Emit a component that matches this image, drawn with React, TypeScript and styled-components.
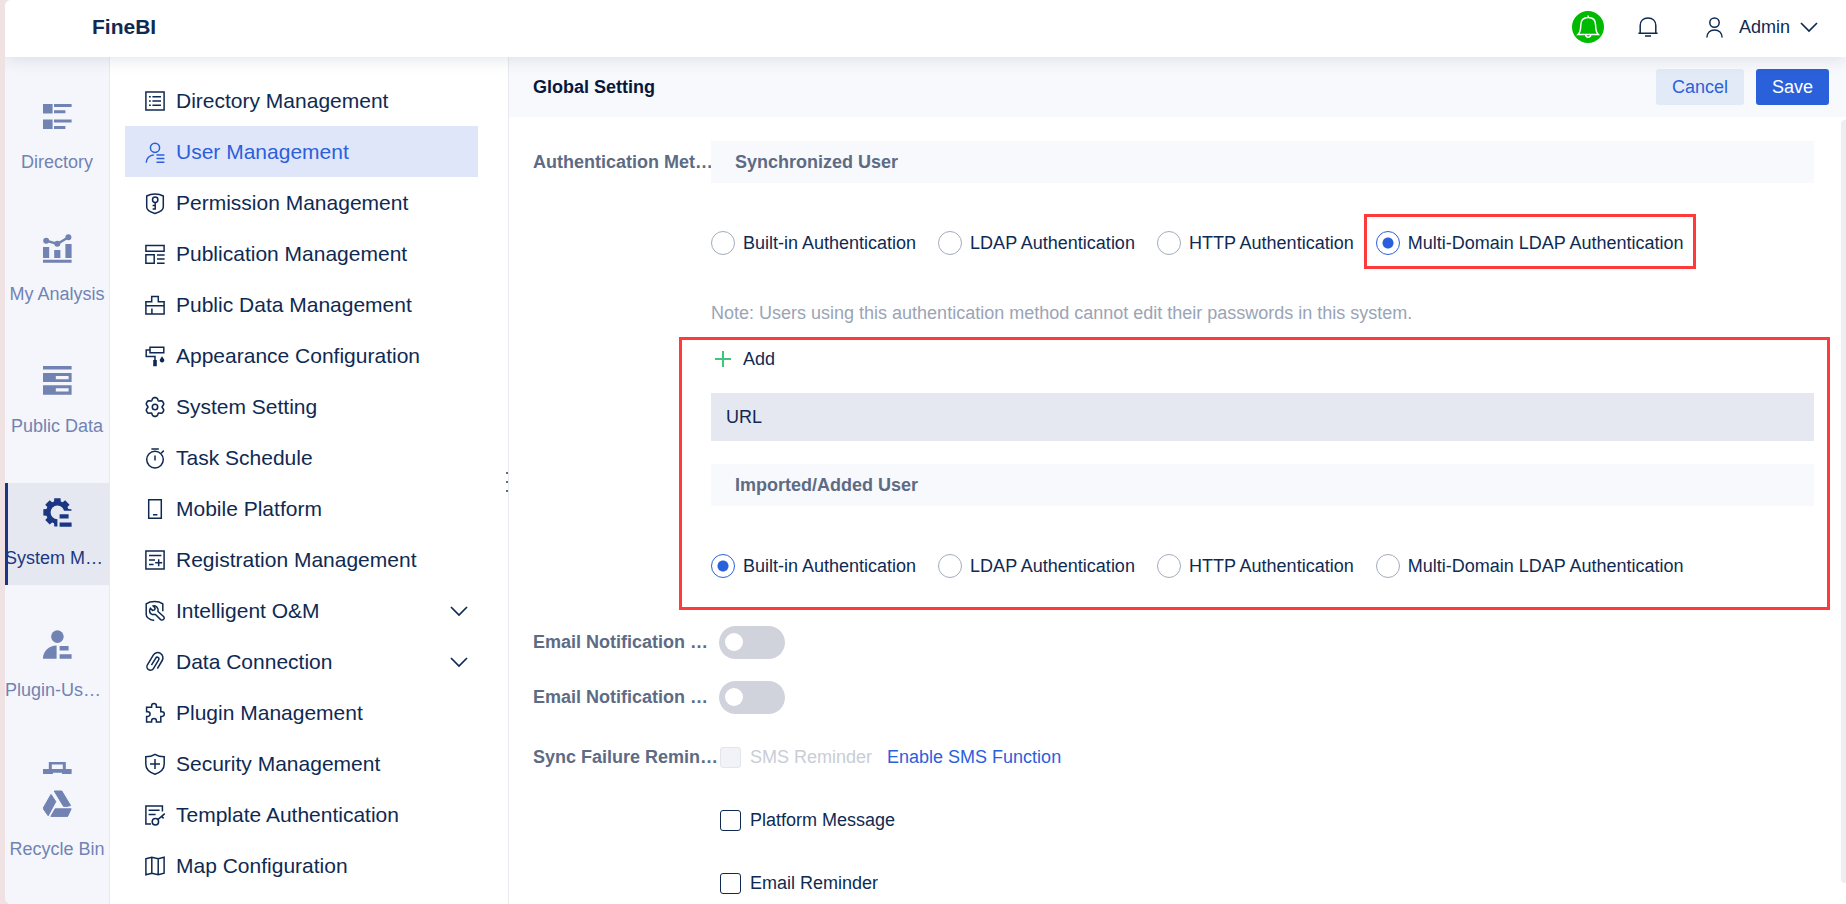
import React, { useState } from "react";
import styled, { createGlobalStyle, css } from "styled-components";

const ink = "#0f2a52";
const muted = "#5d6b84";
const blue = "#2b60db";
const slate = "#7183b3";

const GlobalStyle = createGlobalStyle`
  * { box-sizing: border-box; }
  body {
    margin: 0;
    background: #f0e2e2;
    font-family: "Liberation Sans", Arial, sans-serif;
    font-size: 18px;
    line-height: 24px;
    color: ${ink};
  }
  button, input { font: inherit; margin: 0; }
`;

/* ---------- icon geometry ---------- */

const waveGear = (() => {
  const pts: string[] = [];
  for (let i = 0; i < 72; i++) {
    const t = (i / 72) * Math.PI * 2;
    const r = 8.5 + 1.2 * Math.cos(6 * t) - 0.3 * Math.cos(12 * t);
    pts.push(`${(10 + r * Math.sin(t)).toFixed(2)},${(10 - r * Math.cos(t)).toFixed(2)}`);
  }
  return pts.join(" ");
})();

const toothGear = (() => {
  const pts: string[] = [];
  for (let i = 0; i < 8; i++) {
    const c = (i * Math.PI) / 4;
    [[-0.3, 11.4], [-0.22, 14.4], [0.22, 14.4], [0.3, 11.4]].forEach(([d, r]) =>
      pts.push(`${(14.4 + r * Math.sin(c + d)).toFixed(2)} ${(14.4 - r * Math.cos(c + d)).toFixed(2)}`)
    );
  }
  return `M${pts.join("L")}ZM14.4 7.6A6.8 6.8 0 1 0 14.4 21.2A6.8 6.8 0 1 0 14.4 7.6Z`;
})();

const Line = styled.svg.attrs({ viewBox: "0 0 20 20", "aria-hidden": true })`
  width: 20px;
  height: 20px;
  flex: none;
  overflow: visible;
  fill: none;
  stroke: currentColor;
  stroke-width: 1.5;
`;

const Solid = styled.svg.attrs({ viewBox: "0 0 29 29", "aria-hidden": true })`
  display: block;
  width: 29px;
  height: 29px;
  flex: none;
  fill: currentColor;
`;

const menuIcons: Record<string, React.ReactNode> = {
  directory: (
    <Line>
      <path d="M.9 .9H19.1V19.1H.9ZM4 5.8H5.8M7.4 5.8H16M4 10H5.8M7.4 10H16M4 14.2H5.8M7.4 14.2H16" />
    </Line>
  ),
  user: (
    <Line>
      <circle cx="10" cy="5.8" r="4.6" />
      <path d="M1.2 20.6C1.4 16.4 4.4 13.1 8.8 13M11.5 13H19.4M11.5 16.6H19.4M11.5 20.2H19.4" />
    </Line>
  ),
  permission: (
    <Line>
      <path d="M10 1C13 1 16 1.7 18.3 3V14C18.3 17 14 19.4 10 20.4C6 19.4 1.7 17 1.7 14V3C4 1.7 7 1 10 1Z" />
      <circle cx="10.2" cy="6.8" r="2.7" />
      <path d="M10.2 9.5V16.8M7.6 12.6H10.2M7.6 16H10.2" />
    </Line>
  ),
  publication: (
    <Line>
      <path d="M.9 1.6H19.1V7.2H.9ZM.9 10.8H9.2V19.2H.9ZM12 11H19.6M12 15H19.6M12 19.2H19.6" />
    </Line>
  ),
  publicData: (
    <Line>
      <path d="M.9 19V6.8H6.7V1.4H13.3V6.8H19.1V19ZM.9 10.8H19.1M6.9 13.6V19" />
    </Line>
  ),
  appearance: (
    <Line>
      <path d="M5 1.2H18.8V6.8H5ZM5 4H1.2V10.4H10V14" />
      <path d="M8.2 14H11.8V20.2H8.2ZM17 10.2L19.2 13.4A2.3 2.3 0 1 1 14.9 13.4Z" fill="currentColor" stroke="none" />
    </Line>
  ),
  system: (
    <Line>
      <polygon points={waveGear} strokeWidth="1.6" />
      <circle cx="10" cy="10" r="2.7" strokeWidth="1.6" />
    </Line>
  ),
  task: (
    <Line>
      <circle cx="10" cy="11.6" r="8.3" />
      <path d="M6.4 .9H13.8M10 7.6V12.6M16.2 5.2L18.8 2.6" />
    </Line>
  ),
  mobile: (
    <Line>
      <path d="M3.7 .8H16.3V19.2H3.7ZM8 15.8H12.4" />
    </Line>
  ),
  registration: (
    <Line>
      <path d="M.9 .9H19.1V19.1H.9ZM4 5.6H16.4M4 10H10M4 14.4H8.6M10.2 12.8H17.2M13.7 9.3V16.3" />
    </Line>
  ),
  intelligent: (
    <Line>
      <path d="M17.8 10.2V2.9C15.6 1.4 13 .6 9.7 .6S3.4 1.4 1.2 2.9V13.4C1.2 16.4 4.4 18.4 9.2 19.6" />
      <path d="M8.2 4.9L10.2 7.1L9.5 8.9L7.5 9.4L5.3 7.3C3.9 9.7 4.6 12.2 6.5 13.1C8 13.9 9.6 13.4 10.4 13.4L15.6 18.6C17.8 20 20.2 17.8 18.8 15.8L13 10.6C13.8 7 11.2 4.2 8.2 4.9Z" />
    </Line>
  ),
  connection: (
    <Line>
      <path
        d="M15.4 14.4V5A5.2 5.2 0 0 0 5 5V16.4A3.5 3.5 0 0 0 12 16.4V6.2A1.7 1.7 0 0 0 8.6 6.2V14.6"
        transform="rotate(31 10 10)"
      />
    </Line>
  ),
  plugin: (
    <Line>
      <path d="M1.6 4.2H6.6V3A2.4 2.4 0 0 1 11.4 3V4.2H15.8V8.8H17A2.3 2.3 0 0 1 17 13.4H15.8V18.9H11.4V17.8A2.4 2.4 0 0 0 6.6 17.8V18.9H1.6V13.4H2.8A2.3 2.3 0 0 0 2.8 8.8H1.6Z" />
    </Line>
  ),
  security: (
    <Line>
      <path d="M10 .4C12.6 2 15.8 2.8 19.2 2.8V10C19.2 15.4 15 18.6 10 20.2C5 18.6 .8 15.4 .8 10V2.8C4.2 2.8 7.4 2 10 .4ZM5 10H15M10 5V15" />
    </Line>
  ),
  template: (
    <Line>
      <path d="M6 19H.9V.9H17.4V6.6M3.6 5.2H14.6M3.6 9.6H10.6" />
      <circle cx="10.4" cy="16.8" r="3.2" />
      <path d="M12.8 14.6L19.8 8.6M16.6 11.4L18.6 13.4" />
    </Line>
  ),
  map: (
    <Line>
      <path d="M.9 2.8L6.8 1.2L13.2 2.8L19.1 1.2V17.2L13.2 18.8L6.8 17.2L.9 18.8ZM6.8 1.2V17.2M13.2 2.8V18.8" />
    </Line>
  ),
};

const railIcons: Record<string, React.ReactNode> = {
  directory: (
    <Solid>
      <path d="M0 2H9.6V11.4H0ZM11 2H28.6V5H11ZM11 8.2H22.4V11.2H11ZM0 17.6H9.6V27H0ZM11 17.6H28.6V20.6H11ZM11 24H22.4V27H11Z" />
    </Solid>
  ),
  analysis: (
    <Solid>
      <path d="M0 13H6.2V24H0ZM11.2 16H17.4V24H11.2ZM22.4 10H28.6V24H22.4ZM0 25.8H28.6V28.8H0Z" />
      <path d="M3.2 6.6L14.3 10L25.4 3.2" fill="none" stroke="currentColor" strokeWidth="2.4" />
      <circle cx="3.2" cy="6.8" r="3" />
      <circle cx="14.3" cy="9.8" r="3" />
      <circle cx="25.4" cy="3.2" r="3" />
    </Solid>
  ),
  publicData: (
    <Solid>
      <path fillRule="evenodd" d="M0 0H28.6V3.6H0ZM0 7H28.6V16H0ZM12.8 10V13.2H25.6V10ZM0 19.2H28.6V28.8H0ZM12.8 22.2V25.6H25.6V22.2Z" />
    </Solid>
  ),
  system: (
    <Solid>
      <clipPath id="gear-cut">
        <path d="M0 0H29V12.7H14.4V29H0Z" />
      </clipPath>
      <path d={toothGear} fillRule="evenodd" clipPath="url(#gear-cut)" />
      <path d="M16.6 16.2H25.6V20.4H16.6ZM16.6 24.4H28.6V28.8H16.6Z" />
    </Solid>
  ),
  pluginUser: (
    <Solid>
      <circle cx="14.4" cy="6.6" r="6.3" />
      <path d="M0 28.8V27.6C.6 20.4 6.2 15.4 13.6 15.4V28.8ZM16.6 16H25.6V20.4H16.6ZM16.6 24.2H28.6V28.8H16.6Z" />
    </Solid>
  ),
  toolbox: (
    <Solid>
      <path fillRule="evenodd" d="M5.8 0H22.8V7H28.6V12H19V10.8H10V12H0V7H5.8ZM8.8 2.6V7H19.8V2.6ZM0 14H28.6V28.8H0Z" />
    </Solid>
  ),
  recycle: (
    <Solid>
      <g stroke="currentColor" strokeLinejoin="round">
        <path d="M11.2 2H18.8L27.6 16.6Q24 17.8 20.4 17.2ZM8 5.4L12.8 12.6L5.2 26.8L0 19.4ZM12.2 19.8H28.2L24.6 27.4H7.8Z" />
      </g>
    </Solid>
  ),
};

const Chevron = () => (
  <svg width="18" height="12" viewBox="0 0 18 12" fill="none" stroke={ink} strokeWidth="1.7" aria-hidden>
    <path d="M1 2L9 10L17 2" />
  </svg>
);

/* ---------- frame ---------- */

const Frame = styled.div`
  display: flex;
  flex-direction: column;
  height: 100vh;
  margin-left: 5px;
  overflow: hidden;
  background: #fff;
  border-radius: 6px 0 0 6px;
`;

const Header = styled.header`
  position: relative;
  z-index: 1;
  flex: none;
  display: flex;
  align-items: center;
  justify-content: space-between;
  height: 57px;
  padding: 0 28px 3px 87px;
  background: #fff;
  box-shadow: 0 2px 16px rgba(20, 30, 60, 0.12);
`;

const Brand = styled.h1`
  margin: 0;
  font-size: 21px;
  line-height: 24px;
`;

const HeaderTools = styled.div`
  display: flex;
  align-items: center;
  gap: 34px;
`;

const IconButton = styled.button`
  display: flex;
  padding: 0;
  border: 0;
  background: none;
  color: ${ink};
`;

const AccountButton = styled(IconButton)`
  align-items: center;
  margin-left: 14px;
  gap: 10px;
`;

const AccountName = styled.span`
  margin-left: 6px;
`;

const Body = styled.div`
  flex: 1;
  display: flex;
  min-height: 0;
`;

/* ---------- left rail ---------- */

const Rail = styled.nav`
  flex: none;
  display: flex;
  flex-direction: column;
  width: 105px;
  padding-bottom: 28px;
  background: #f4f6fb;
  border-right: 1px solid #e8eaf0;
`;

const RailList = styled.div`
  flex: 1;
  display: flex;
  flex-direction: column;
  gap: 30px;
  min-height: 0;
  padding-top: 30px;
  overflow: hidden;
`;

const RailItem = styled.button<{ $active?: boolean }>`
  flex: none;
  display: flex;
  flex-direction: column;
  align-items: center;
  gap: 19px;
  height: 102px;
  padding: 15px 0 0;
  border: 0;
  background: ${(p) => (p.$active ? "#e5e8f1" : "none")};
  box-shadow: ${(p) => (p.$active ? "inset 3px 0 #1b3783" : "none")};
  color: ${(p) => (p.$active ? "#1b3783" : slate)};
  white-space: nowrap;
`;

const RailLabel = styled.span<{ $start?: boolean }>`
  align-self: ${(p) => (p.$start ? "flex-start" : "center")};
`;

/* ---------- menu ---------- */

const Menu = styled.nav`
  position: relative;
  flex: none;
  width: 399px;
  padding: 18px 30px 0 15px;
  border-right: 1px solid #e8eaf0;
`;

const MenuItem = styled.button<{ $active?: boolean }>`
  display: flex;
  align-items: center;
  gap: 11px;
  width: 100%;
  height: 51px;
  padding: 0 10px 0 20px;
  border: 0;
  background: ${(p) => (p.$active ? "#e0e6fa" : "none")};
  color: ${(p) => (p.$active ? blue : ink)};
  font-size: 21px;
  text-align: left;
`;

const MenuText = styled.span`
  flex: 1;
`;

const Grip = styled.span`
  position: absolute;
  right: 0;
  top: calc(50% - 9px);
  display: grid;
  gap: 7px;

  i {
    width: 2px;
    height: 2px;
    background: ${muted};
  }
`;

/* ---------- settings ---------- */

const Main = styled.main`
  position: relative;
  flex: 1;
  min-width: 0;
`;

const TitleBar = styled.div`
  display: flex;
  align-items: center;
  gap: 12px;
  height: 60px;
  padding: 0 17px 0 24px;
  background: #f8f9fd;
`;

const Title = styled.h2`
  flex: 1;
  margin: 0;
  font-size: 18px;
  color: #06183c;
`;

const Button = styled.button<{ $primary?: boolean }>`
  height: 36px;
  padding: 0 16px;
  border: 0;
  border-radius: 3px;
  background: ${(p) => (p.$primary ? blue : "#e2eaf8")};
  color: ${(p) => (p.$primary ? "#fff" : blue)};
`;

const ScrollThumb = styled.div`
  position: absolute;
  top: 63px;
  right: 0;
  bottom: 21px;
  width: 5px;
  border-radius: 4px 0 0 4px;
  background: #eceef2;
`;

const Form = styled.form`
  display: grid;
  grid-template-columns: 178px minmax(0, 1fr);
  padding: 24px 32px 0 24px;
`;

const FieldLabel = styled.div<{ $height: number }>`
  line-height: ${(p) => p.$height}px;
  font-weight: bold;
  color: ${muted};
  white-space: nowrap;
`;

const Field = styled.div<{ $after: number; $inset?: number }>`
  padding-left: ${(p) => p.$inset ?? 0}px;
  padding-bottom: ${(p) => p.$after}px;
`;

const GroupTitle = styled.h3`
  margin: 0;
  padding-left: 24px;
  font-size: 18px;
  line-height: 42px;
  color: ${muted};
  background: #f8f9fd;
`;

const RadioRow = styled.div`
  display: flex;
  gap: 22px;
  margin-top: 48px;
`;

const outline = css`
  position: absolute;
  border: 3px solid #ff3a3a;
  content: "";
  pointer-events: none;
`;

const RadioLabel = styled.label<{ $marked?: boolean }>`
  position: relative;
  display: flex;
  align-items: center;
  gap: 8px;
  white-space: nowrap;

  ${(p) =>
    p.$marked &&
    css`
      &::after {
        ${outline}
        inset: -17px -13px -14px -12px;
      }
    `}
`;

const Radio = styled.input.attrs({ type: "radio" })`
  appearance: none;
  width: 24px;
  height: 24px;
  border: 1px solid #a3abbb;
  border-radius: 50%;

  &:checked {
    border-color: ${blue};
    background: radial-gradient(circle, ${blue} 5px, transparent 6px);
  }
`;

const Note = styled.p`
  margin: 46px 0 22px;
  color: #9aa4b5;
`;

const MarkedArea = styled.div`
  position: relative;

  &::after {
    ${outline}
    inset: -10px -16px -32px -32px;
  }
`;

const AddButton = styled.button`
  display: flex;
  align-items: center;
  gap: 8px;
  padding: 0;
  border: 0;
  background: none;
  color: ${ink};
`;

const UrlTable = styled.table`
  width: 100%;
  margin: 22px 0 23px;
  border-collapse: collapse;

  th {
    height: 48px;
    padding: 0 15px;
    background: #e5e8f1;
    font-weight: normal;
    text-align: left;
  }
`;

const Switch = styled.input.attrs({ type: "checkbox", role: "switch" })`
  appearance: none;
  display: block;
  width: 66px;
  height: 33px;
  padding: 7px 6px;
  border-radius: 17px;
  background: #d0d3db;

  &::before {
    content: "";
    display: block;
    width: 18px;
    height: 18px;
    border-radius: 50%;
    background: #fff;
  }

  &:checked {
    background: ${blue};
    padding-left: 42px;
  }
`;

const CheckList = styled.div`
  display: grid;
  gap: 42px;
  line-height: 21px;
`;

const CheckRow = styled.div`
  display: flex;
  gap: 15px;
`;

const CheckLabel = styled.label<{ $disabled?: boolean }>`
  display: flex;
  align-items: center;
  gap: 9px;
  color: ${(p) => (p.$disabled ? "#c9cdd5" : ink)};
`;

const Checkbox = styled.input.attrs({ type: "checkbox" })`
  appearance: none;
  width: 21px;
  height: 21px;
  border: 1px solid ${ink};
  border-radius: 3px;

  &:checked {
    background: ${blue};
  }
  &:disabled {
    border-color: #e3e5eb;
    background: #f2f3f8;
  }
`;

const Link = styled.a`
  color: ${blue};
  text-decoration: none;
`;

/* ---------- data ---------- */

const rail = [
  { icon: "directory", label: "Directory" },
  { icon: "analysis", label: "My Analysis" },
  { icon: "publicData", label: "Public Data" },
  { icon: "system", label: "System M…", active: true, start: true },
  { icon: "pluginUser", label: "Plugin-Us…", start: true },
  { icon: "toolbox", label: "" },
];

const menu = [
  { icon: "directory", label: "Directory Management" },
  { icon: "user", label: "User Management", active: true },
  { icon: "permission", label: "Permission Management" },
  { icon: "publication", label: "Publication Management" },
  { icon: "publicData", label: "Public Data Management" },
  { icon: "appearance", label: "Appearance Configuration" },
  { icon: "system", label: "System Setting" },
  { icon: "task", label: "Task Schedule" },
  { icon: "mobile", label: "Mobile Platform" },
  { icon: "registration", label: "Registration Management" },
  { icon: "intelligent", label: "Intelligent O&M", expandable: true },
  { icon: "connection", label: "Data Connection", expandable: true },
  { icon: "plugin", label: "Plugin Management" },
  { icon: "security", label: "Security Management" },
  { icon: "template", label: "Template Authentication" },
  { icon: "map", label: "Map Configuration" },
];

const methods = [
  "Built-in Authentication",
  "LDAP Authentication",
  "HTTP Authentication",
  "Multi-Domain LDAP Authentication",
];

function MethodPicker({ name, initial, marked }: { name: string; initial: number; marked?: number }) {
  const [value, setValue] = useState(initial);
  return (
    <RadioRow>
      {methods.map((method, i) => (
        <RadioLabel key={method} $marked={i === marked}>
          <Radio name={name} checked={value === i} onChange={() => setValue(i)} />
          {method}
        </RadioLabel>
      ))}
    </RadioRow>
  );
}

export default function App() {
  return (
    <>
      <GlobalStyle />
      <Frame>
        <Header>
          <Brand>FineBI</Brand>
          <HeaderTools>
            <IconButton type="button">
              <svg width="32" height="32" viewBox="0 0 32 32" fill="none" stroke="#fff" strokeWidth="1.5" aria-hidden>
                <circle cx="16" cy="16" r="16" fill="#00ba00" stroke="none" />
                <path d="M6 23.6C8.4 21.4 8.8 19.6 8.8 14C8.8 9 11.8 6.4 16.2 6.4S23.6 9 23.6 14C23.6 19.6 24 21.4 26.4 23.6ZM16.2 6.4V4.4M13.6 23.8C13.8 27 18.6 27 18.8 23.8" />
              </svg>
            </IconButton>
            <IconButton type="button">
              <svg width="20" height="20" viewBox="0 0 20 20" fill="none" stroke="currentColor" strokeWidth="1.5" aria-hidden>
                <path d="M.4 16.2H19.6M2.2 16.2V8.6C2.2 3.8 5.4 .9 10 .9S17.8 3.8 17.8 8.6V16.2M7 19H13" />
              </svg>
            </IconButton>
            <AccountButton type="button">
              <svg width="17" height="21" viewBox="0 0 17 21" fill="none" stroke="currentColor" strokeWidth="1.5" aria-hidden>
                <circle cx="8.5" cy="5.6" r="4.7" />
                <path d="M.9 20.6C1 15.8 4 12.9 8.5 12.9S16 15.8 16.1 20.6" />
              </svg>
              <AccountName>Admin</AccountName>
              <Chevron />
            </AccountButton>
          </HeaderTools>
        </Header>
        <Body>
          <Rail>
            <RailList>
              {rail.map((item) => (
                <RailItem key={item.icon} type="button" $active={item.active}>
                  {railIcons[item.icon]}
                  {item.label && <RailLabel $start={item.start}>{item.label}</RailLabel>}
                </RailItem>
              ))}
            </RailList>
            <RailItem type="button">
              {railIcons.recycle}
              <RailLabel>Recycle Bin</RailLabel>
            </RailItem>
          </Rail>
          <Menu>
            {menu.map((item) => (
              <MenuItem key={item.label} type="button" $active={item.active}>
                {menuIcons[item.icon]}
                <MenuText>{item.label}</MenuText>
                {item.expandable && <Chevron />}
              </MenuItem>
            ))}
            <Grip>
              <i />
              <i />
              <i />
            </Grip>
          </Menu>
          <Main>
            <TitleBar>
              <Title>Global Setting</Title>
              <Button type="button">Cancel</Button>
              <Button type="submit" form="global-setting" $primary>
                Save
              </Button>
            </TitleBar>
            <Form id="global-setting" onSubmit={(e) => e.preventDefault()}>
              <FieldLabel $height={42}>Authentication Met…</FieldLabel>
              <Field $after={48}>
                <GroupTitle>Synchronized User</GroupTitle>
                <MethodPicker name="synchronized" initial={3} marked={3} />
                <Note>Note: Users using this authentication method cannot edit their passwords in this system.</Note>
                <MarkedArea>
                  <AddButton type="button">
                    <svg width="24" height="24" viewBox="0 0 24 24" stroke="#3cc77c" strokeWidth="2" aria-hidden>
                      <path d="M4 12H20M12 4V20" />
                    </svg>
                    Add
                  </AddButton>
                  <UrlTable>
                    <thead>
                      <tr>
                        <th scope="col">URL</th>
                      </tr>
                    </thead>
                  </UrlTable>
                  <GroupTitle>Imported/Added User</GroupTitle>
                  <MethodPicker name="imported" initial={0} />
                </MarkedArea>
              </Field>

              <FieldLabel as="label" htmlFor="notify-1" $height={33}>
                Email Notification …
              </FieldLabel>
              <Field $after={22} $inset={8}>
                <Switch id="notify-1" />
              </Field>

              <FieldLabel as="label" htmlFor="notify-2" $height={33}>
                Email Notification …
              </FieldLabel>
              <Field $after={33} $inset={8}>
                <Switch id="notify-2" />
              </Field>

              <FieldLabel $height={21}>Sync Failure Remin…</FieldLabel>
              <Field $after={0} $inset={9}>
                <CheckList>
                  <CheckRow>
                    <CheckLabel $disabled>
                      <Checkbox disabled />
                      SMS Reminder
                    </CheckLabel>
                    <Link href="#sms">Enable SMS Function</Link>
                  </CheckRow>
                  <CheckLabel>
                    <Checkbox />
                    Platform Message
                  </CheckLabel>
                  <CheckLabel>
                    <Checkbox />
                    Email Reminder
                  </CheckLabel>
                </CheckList>
              </Field>
            </Form>
            <ScrollThumb />
          </Main>
        </Body>
      </Frame>
    </>
  );
}
